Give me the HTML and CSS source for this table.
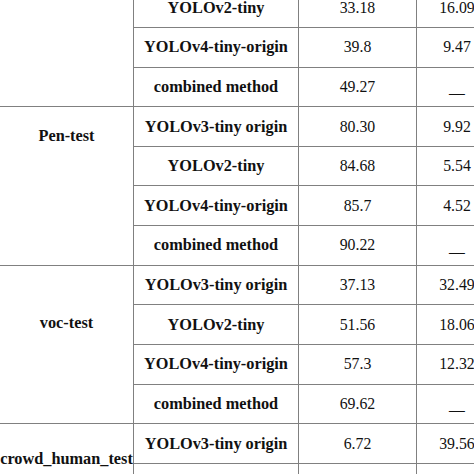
FILE: index.html
```html
<!DOCTYPE html>
<html>
<head>
<meta charset="utf-8">
<link rel="stylesheet" href="styles.css">
</head>
<body>
<div class="table">
  <div class="group g-first"><span></span></div>
  <div class="model">YOLOv3-tiny origin</div><div class="num"></div><div class="num"></div>
  <div class="model">YOLOv2-tiny</div><div class="num">33.18</div><div class="num">16.09</div>
  <div class="model">YOLOv4-tiny-origin</div><div class="num">39.8</div><div class="num">9.47</div>
  <div class="model">combined method</div><div class="num">49.27</div><div class="num"><span class="dash">—</span></div>

  <div class="group g-pen"><span>Pen-test</span></div>
  <div class="model">YOLOv3-tiny origin</div><div class="num">80.30</div><div class="num">9.92</div>
  <div class="model">YOLOv2-tiny</div><div class="num">84.68</div><div class="num">5.54</div>
  <div class="model">YOLOv4-tiny-origin</div><div class="num">85.7</div><div class="num">4.52</div>
  <div class="model">combined method</div><div class="num">90.22</div><div class="num"><span class="dash">—</span></div>

  <div class="group g-voc"><span>voc-test</span></div>
  <div class="model">YOLOv3-tiny origin</div><div class="num">37.13</div><div class="num">32.49</div>
  <div class="model">YOLOv2-tiny</div><div class="num">51.56</div><div class="num">18.06</div>
  <div class="model">YOLOv4-tiny-origin</div><div class="num">57.3</div><div class="num">12.32</div>
  <div class="model">combined method</div><div class="num">69.62</div><div class="num"><span class="dash">—</span></div>

  <div class="group g-crowd"><span>crowd_human_test</span></div>
  <div class="model">YOLOv3-tiny origin</div><div class="num">6.72</div><div class="num">39.56</div>
  <div class="model">YOLOv2-tiny</div><div class="num"></div><div class="num"></div>
</div>
</body>
</html>
```
FILE: styles.css
```css
html, body {
  margin: 0;
  padding: 0;
  overflow: hidden;
  background: #fff;
  width: 474px;
  height: 474px;
}

.table {
  display: grid;
  grid-template-columns: 133px 164px 117px 80px;
  grid-auto-rows: 38.64px;
  gap: 1px;
  background: #808080;
  margin-top: -51.3px;
  width: 497px;
  font-family: "Liberation Serif", "Times New Roman", serif;
  color: #111;
}

.table > div {
  background: #fff;
  display: flex;
  justify-content: center;
  align-items: center;
  white-space: nowrap;
}

.group {
  grid-column: 1;
  grid-row: span 4;
  align-items: flex-start !important;
  font-weight: bold;
  font-size: 16.3px;
  line-height: 16px;
}

.g-first { padding-top: 20px; }
.g-pen { padding-top: 21px; }
.g-voc { padding-top: 49px; }
.g-crowd { padding-top: 27px; }

.model {
  font-weight: bold;
  font-size: 16.3px;
}

.num {
  font-size: 15.8px;
}

.dash {
  display: inline-block;
  padding-top: 13px;
  line-height: 16px;
}
```
